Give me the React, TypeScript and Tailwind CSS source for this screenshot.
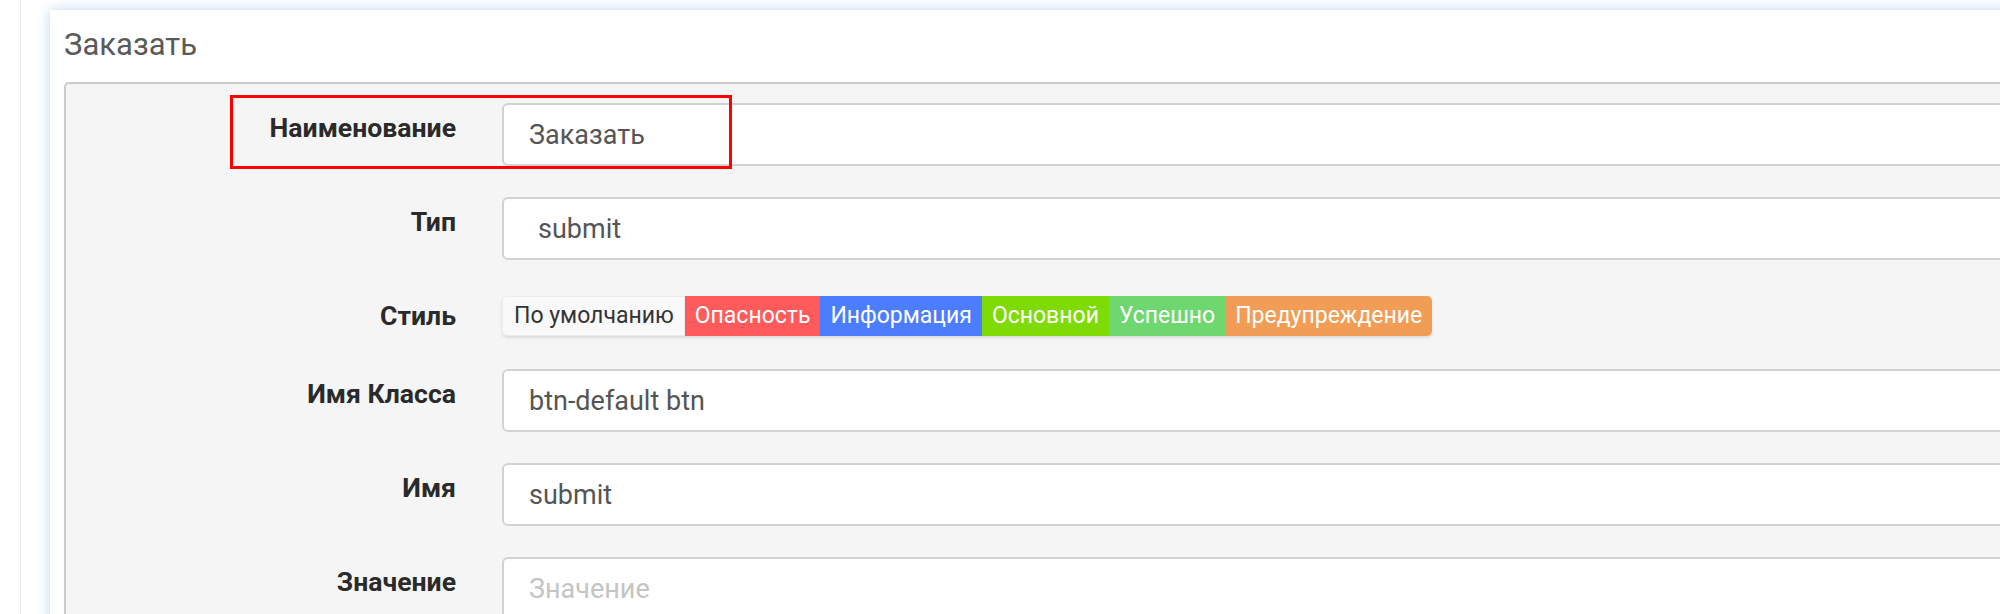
import React from "react";

const labelCls =
  "w-[390px] shrink-0 text-right pt-[7px] text-[26.6px] leading-[36px] font-bold text-[#2a2a2a]";

function InputRow({
  label,
  value,
  placeholder,
  select,
}: {
  label: string;
  value?: string;
  placeholder?: string;
  select?: boolean;
}) {
  return (
    <div className="flex mb-[31px]">
      <div className={labelCls}>{label}</div>
      <div className="ml-[46px] flex-1 h-[63px] bg-white border-2 border-[#d2d2d2] rounded-[6px] flex items-center pl-[25px]">
        {value ? (
          <span className={`text-[27px] leading-[30px] text-[#555] ${select ? "pl-[9px]" : ""}`}>
            {value}
          </span>
        ) : (
          <span className="text-[27px] leading-[30px] text-[#c4c4c4]">{placeholder}</span>
        )}
      </div>
    </div>
  );
}

const styles: { name: string; cls: string }[] = [
  { name: "По умолчанию", cls: "bg-[#f9f9f9] text-[#333] border border-[#ececec] rounded-l-[5px] pl-[11px] pr-[10px]" },
  { name: "Опасность", cls: "bg-[#ff5a5c] text-white px-[10px]" },
  { name: "Информация", cls: "bg-[#4c7dff] text-white px-[10px]" },
  { name: "Основной", cls: "bg-[#7edb06] text-white px-[10px]" },
  { name: "Успешно", cls: "bg-[#6fd770] text-white px-[10px]" },
  { name: "Предупреждение", cls: "bg-[#f19d56] text-white rounded-r-[5px] px-[10px]" },
];

export default function App() {
  return (
    <div className="relative w-[2000px] h-[614px] overflow-hidden bg-white font-['Roboto',sans-serif]">
      <div className="flex h-full">
        <div className="w-[21px] shrink-0 border-r border-[#ebebeb]" />
        <div className="flex-1 pl-[29px] pt-[10px] overflow-hidden">
          <div className="w-[2100px] h-[700px] bg-white shadow-[0_0_12px_rgba(110,165,230,0.45)] pl-[14px]">
            <div className="pt-[15px] text-[31px] leading-[40px] text-[#5a5a5a]">Заказать</div>
            <div className="mt-[17px] h-[600px] bg-[#f5f5f5] border-2 border-[#cbcbcb] rounded-tl-[5px] pt-[19px]">
              <InputRow label="Наименование" value="Заказать" />
              <InputRow label="Тип" value="submit" select />
              <div className="flex h-[47px] mb-[31px]">
                <div className={labelCls}>Стиль</div>
                <div className="ml-[46px] mt-[5px] flex h-[40px] shadow-[0_2px_3px_rgba(0,0,0,0.10)] rounded-[5px]">
                  {styles.map((s) => (
                    <div
                      key={s.name}
                      className={`h-[40px] flex items-center text-[23px] leading-[28px] ${s.cls}`}
                    >
                      {s.name}
                    </div>
                  ))}
                </div>
              </div>
              <InputRow label="Имя Класса" value="btn-default btn" />
              <InputRow label="Имя" value="submit" />
              <InputRow label="Значение" placeholder="Значение" />
            </div>
          </div>
        </div>
      </div>
      <div className="absolute left-[230px] top-[95px] w-[502px] h-[74px] border-[3px] border-[#ff0000]" />
    </div>
  );
}
